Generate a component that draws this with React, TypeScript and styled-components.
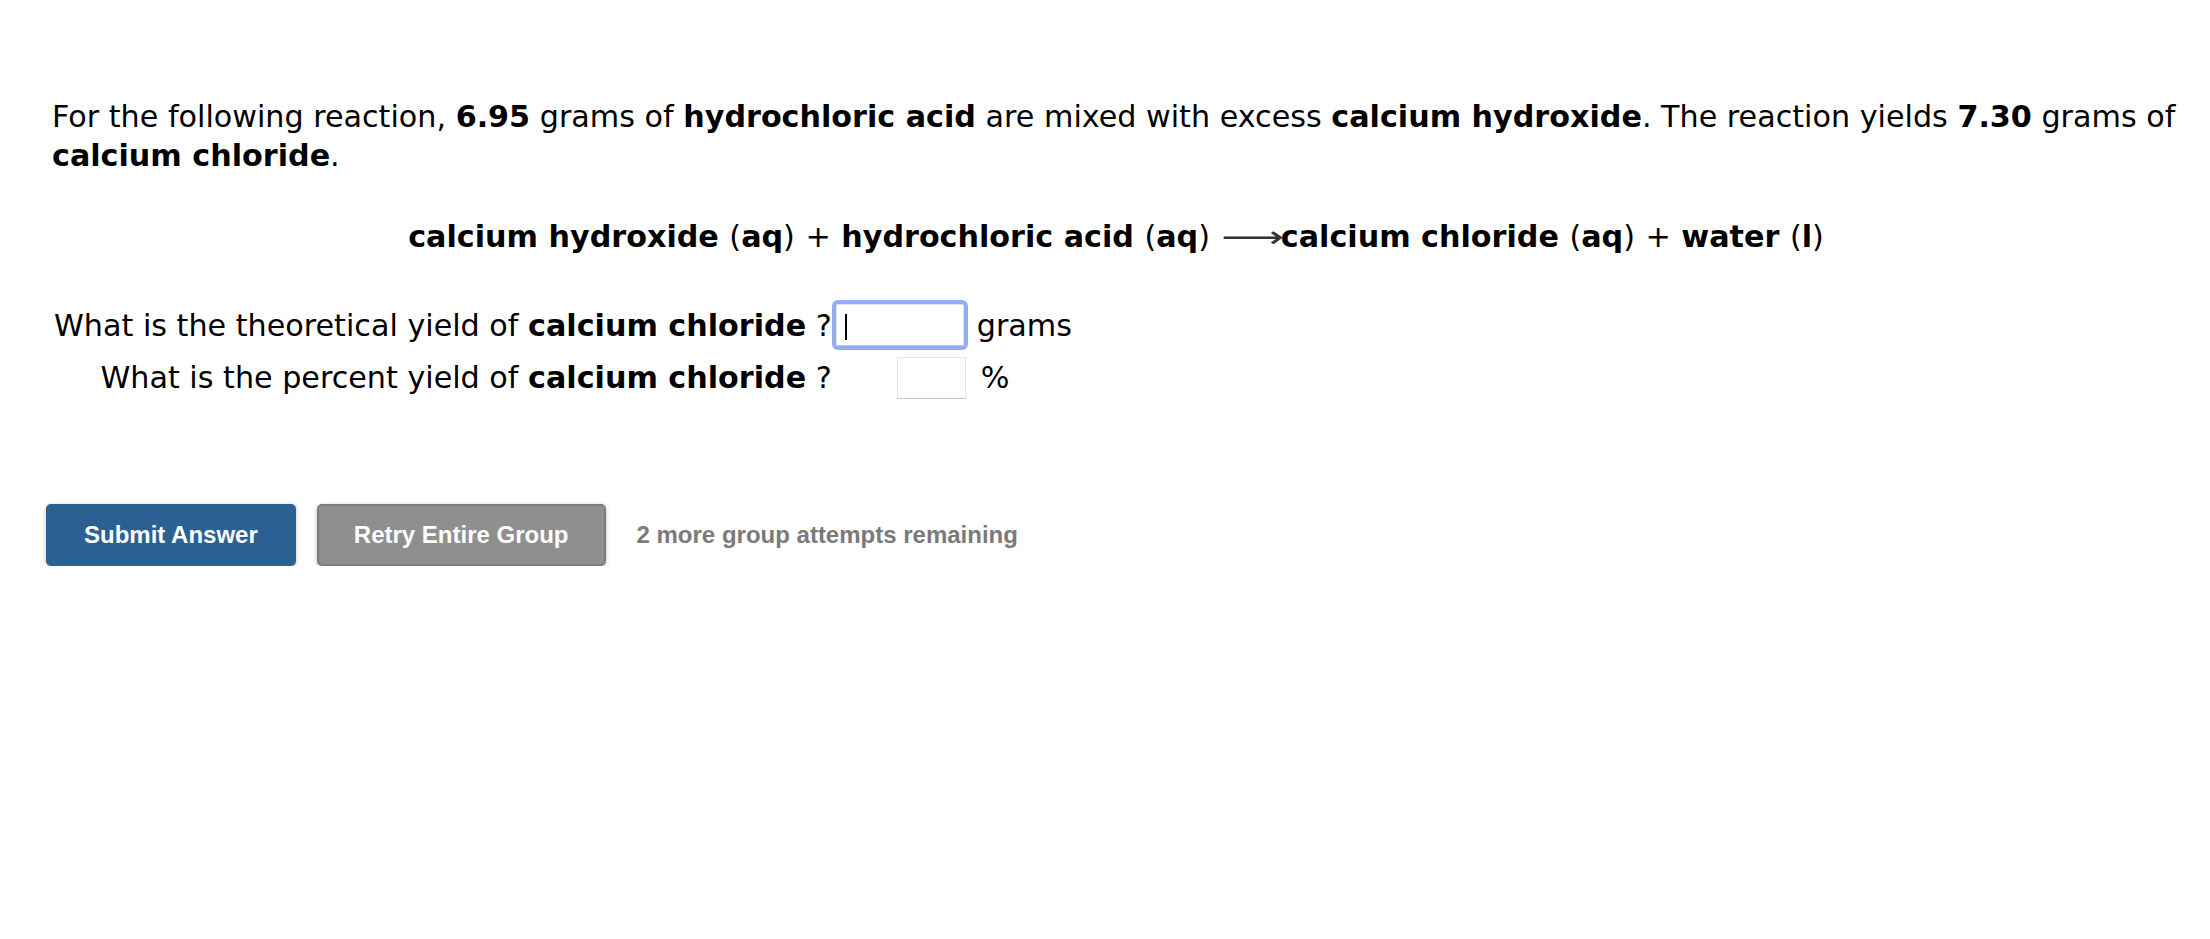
import React from 'react'
import styled, { createGlobalStyle } from 'styled-components'

const GlobalStyle = createGlobalStyle`
  html, body {
    margin: 0;
    padding: 0;
    background: #ffffff;
  }
`

const Page = styled.div`
  padding: 97px 30px 0 52px;
  font-family: 'DejaVu Sans', Verdana, sans-serif;
  font-size: 30.2px;
  line-height: 39px;
  color: #000;
`

const Intro = styled.p`
  margin: 0;
`

const Equation = styled.div`
  margin: 42px 0 38px;
  text-align: center;
  font-weight: bold;
`

const Paren = styled.span`
  font-weight: normal;
`

const Arrow = styled.span`
  display: inline-block;
  font-weight: normal;
  color: #333;
  transform: scaleX(1.45);
  transform-origin: left center;
  margin-right: 17px;
`

const QuestionTable = styled.table`
  border-collapse: separate;
  border-spacing: 2px 6px;
`

const LabelCell = styled.td`
  text-align: right;
  padding: 0;
  white-space: nowrap;
`

const InputCell = styled.td`
  text-align: right;
  padding: 0 6px 0 2px;
  vertical-align: middle;
`

const UnitCell = styled.td<{ $shift?: number }>`
  padding: 0 0 0 ${p => 3 + (p.$shift ?? 0)}px;
  text-align: left;
  vertical-align: middle;
`

const InputWrap = styled.span`
  position: relative;
  display: inline-block;
`

const AnswerInput = styled.input<{ $wide?: boolean; $focused?: boolean }>`
  box-sizing: border-box;
  width: ${p => (p.$wide ? '128px' : '69px')};
  height: 42px;
  border: 1px solid #e6e6e6;
  border-bottom-color: #c6c6c6;
  border-radius: 1px;
  background: #fff;
  font: inherit;
  padding: 0 6px;
  caret-color: transparent;
  outline: ${p => (p.$focused ? '4px solid #93acf2' : 'none')};
  outline-offset: 0;
  ${p => (p.$focused ? 'border-radius: 2px; margin: 4px 2px 4px 0;' : '')}
  vertical-align: middle;
`

const Caret = styled.span`
  position: absolute;
  left: 9px;
  top: 14px;
  width: 2px;
  height: 26px;
  background: #000;
`

const Actions = styled.div`
  display: flex;
  align-items: center;
  gap: 21px;
  margin-top: 99px;
  margin-left: -6px;
  font-family: 'Liberation Sans', Arial, sans-serif;
`

const Button = styled.button<{ $variant: 'primary' | 'muted' }>`
  height: 62px;
  padding: 0 ${p => (p.$variant === 'primary' ? '36px' : '35px')};
  border-radius: 5px;
  font-family: 'Liberation Sans', Arial, sans-serif;
  font-weight: bold;
  font-size: 24px;
  color: #fff;
  background: ${p => (p.$variant === 'primary' ? '#2a6192' : '#8f8f8f')};
  border: 2px solid ${p => (p.$variant === 'primary' ? '#2a6192' : '#7c7c7c')};
  box-shadow: 0 1px 4px rgba(0, 0, 0, 0.25);
  cursor: pointer;
`

const Remaining = styled.span`
  margin-left: 10px;
  font-size: 24px;
  font-weight: bold;
  color: #7a7a7a;
`

export default function App() {
  return (
    <>
      <GlobalStyle />
      <Page>
        <Intro>
          For the following reaction, <b>6.95</b> grams of <b>hydrochloric acid</b> are mixed
          with excess <b>calcium hydroxide</b>. The reaction yields <b>7.30</b> grams of{' '}
          <b>calcium chloride</b>.
        </Intro>

        <Equation>
          calcium hydroxide <Paren>(</Paren>aq<Paren>)</Paren> <Paren>+</Paren> hydrochloric
          acid <Paren>(</Paren>aq<Paren>)</Paren> <Arrow>⟶</Arrow>calcium chloride{' '}
          <Paren>(</Paren>aq<Paren>)</Paren> <Paren>+</Paren> water <Paren>(</Paren>l
          <Paren>)</Paren>
        </Equation>

        <QuestionTable>
          <tbody>
            <tr>
              <LabelCell>
                What is the theoretical yield of <b>calcium chloride</b> ?
              </LabelCell>
              <InputCell>
                <InputWrap>
                  <AnswerInput $wide $focused aria-label="theoretical yield" />
                  <Caret />
                </InputWrap>
              </InputCell>
              <UnitCell>grams</UnitCell>
            </tr>
            <tr>
              <LabelCell>
                What is the percent yield of <b>calcium chloride</b> ?
              </LabelCell>
              <InputCell>
                <AnswerInput aria-label="percent yield" />
              </InputCell>
              <UnitCell $shift={4}>%</UnitCell>
            </tr>
          </tbody>
        </QuestionTable>

        <Actions>
          <Button $variant="primary">Submit Answer</Button>
          <Button $variant="muted">Retry Entire Group</Button>
          <Remaining>2 more group attempts remaining</Remaining>
        </Actions>
      </Page>
    </>
  )
}
